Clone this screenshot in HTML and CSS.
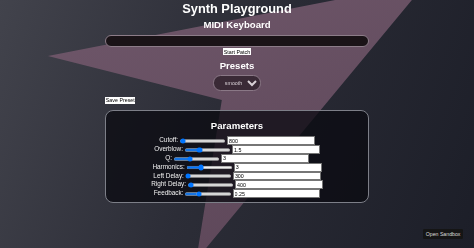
FILE: index.html
```html
<!DOCTYPE html>
<html>
    <head>
        <title>Synth Playground</title>
        <meta name="viewport" content="width=device-width, initial-scale=1.0">
        <link rel="stylesheet" href="styles.css">
    </head>
    <body>
        <div class="app">
            <h1 class="title">Synth Playground</h1>
            <main class="stage">
                <h2 class="heading">MIDI Keyboard</h2>
                <div class="keyboard"></div>
                <button class="btn start-btn">Start Patch</button>
                <h2 class="heading presets-title">Presets</h2>
                <select class="preset-select">
                    <option selected>smooth</option>
                    <option>bright</option>
                    <option>dark</option>
                </select>
                <button class="btn save-btn">Save Preset</button>
                <section class="params">
                    <h2 class="heading">Parameters</h2>
                    <div class="param">
                        <label>Cutoff:</label><input type="range" min="0" max="40000" value="800"><input type="text" value="800">
                    </div>
                    <div class="param">
                        <label>Overblow:</label><input type="range" min="0" max="5" step="0.1" value="1.5"><input type="text" value="1.5">
                    </div>
                    <div class="param">
                        <label>Q:</label><input type="range" min="0" max="9" step="0.1" value="3"><input type="text" value="3">
                    </div>
                    <div class="param">
                        <label>Harmonics:</label><input type="range" min="0" max="10" value="3"><input type="text" value="3">
                    </div>
                    <div class="param">
                        <label>Left Delay:</label><input type="range" min="0" max="30000" value="300"><input type="text" value="300">
                    </div>
                    <div class="param">
                        <label>Right Delay:</label><input type="range" min="0" max="20000" value="400"><input type="text" value="400">
                    </div>
                    <div class="param">
                        <label>Feedback:</label><input type="range" min="0" max="0.9" step="0.01" value="0.25"><input type="text" value="0.25">
                    </div>
                </section>
            </main>
            <button class="sandbox-btn">Open Sandbox</button>
        </div>
    </body>
</html>
```

FILE: styles.css
```css
html, body {
    height: 100%;
}

body {
    margin: 0;
    overflow: hidden;
    font-family: "Liberation Sans", Arial, sans-serif;
    background: linear-gradient(110deg, #42434c 0%, #2c2d37 45%, #1c1e28 100%);
}

/* the big mauve star shape behind everything */
body::before {
    content: "";
    position: fixed;
    top: 0;
    left: 0;
    right: 0;
    bottom: 0;
    z-index: -1;
    background: linear-gradient(160deg, #70586b, #5a4456);
    clip-path: polygon(70.7% 0, 86.9% 0, 41.4% 104.8%, 46.8% 40.3%, 10.1% 22.6%);
}

/* page was designed at 2.5x this size */
.app {
    zoom: 0.4;
    padding-top: 2px;
    color: white;
}

.title {
    margin: 0;
    font-size: 32px;
    text-align: center;
}

.heading {
    margin: 0;
    font-size: 24px;
    text-align: center;
}

.stage {
    width: 660px;
    margin: 8px auto 0 auto;
    display: flex;
    flex-direction: column;
    align-items: center;
}

.keyboard {
    width: 658px;
    height: 29px;
    margin-top: 13px;
    box-sizing: border-box;
    border: 2px solid #8c7c88;
    border-radius: 15px;
    background-color: #1a1317;
}

.btn {
    padding: 1px 1px;
    border: none;
    background-color: white;
    color: black;
    font-family: "Liberation Sans", Arial, sans-serif;
    font-size: 13.33px;
    cursor: pointer;
}

.start-btn {
    margin-top: 4px;
}

.presets-title {
    margin-top: 12px;
}

.preset-select {
    width: 119px;
    height: 38px;
    margin-top: 11px;
    padding: 0 0 0 24px;
    border: 2px solid #8a7886;
    border-radius: 19px;
    background-color: #3a2a36;
    color: #d8d0d6;
    font-family: "Liberation Sans", Arial, sans-serif;
    font-size: 13.33px;
}

.save-btn {
    align-self: flex-start;
    margin-top: 16px;
    margin-left: 1px;
}

.params {
    width: 660px;
    margin-top: 16px;
    padding: 23px 0 9px 0;
    box-sizing: border-box;
    border: 2px solid #7d7f88;
    border-radius: 20px;
    background-color: rgba(10, 10, 16, 0.75);
    text-align: center;
}

.params > .heading {
    margin-bottom: 13px;
}

.param {
    font-size: 16px;
    color: #f2f2f2;
}

.param input[type="range"] {
    width: 119px;
    margin: 2px;
    vertical-align: middle;
}

.param input[type="text"] {
    width: 210px;
    font-family: "Liberation Sans", Arial, sans-serif;
    font-size: 13.33px;
}

.sandbox-btn {
    position: fixed;
    right: 27px;
    bottom: 22px;
    padding: 5px 7px;
    border: none;
    border-radius: 3px;
    background-color: #151515;
    color: #dddddd;
    font-family: "Liberation Sans", Arial, sans-serif;
    font-size: 13px;
    line-height: 16px;
}
```
